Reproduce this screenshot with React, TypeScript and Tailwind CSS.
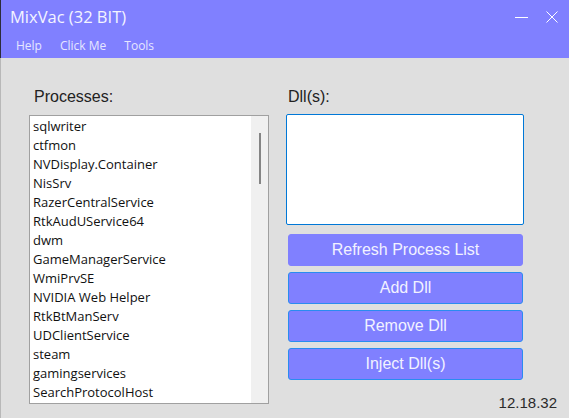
import React from 'react';

const processes = [
  'sqlwriter',
  'ctfmon',
  'NVDisplay.Container',
  'NisSrv',
  'RazerCentralService',
  'RtkAudUService64',
  'dwm',
  'GameManagerService',
  'WmiPrvSE',
  'NVIDIA Web Helper',
  'RtkBtManServ',
  'UDClientService',
  'steam',
  'gamingservices',
  'SearchProtocolHost',
];

const buttons = ['Refresh Process List', 'Add Dll', 'Remove Dll', 'Inject Dll(s)'];

export default function App() {
  return (
    <div className="w-[569px] h-[418px] bg-[#dfdfdf] flex flex-col overflow-hidden">
      {/* Title bar + menu */}
      <div className="bg-[#8080ff] h-[58px] flex flex-col shrink-0 border-l border-[#2c2c3a] font-['Open_Sans','Noto_Sans',sans-serif] text-white">
        <div className="flex items-center h-[34px] pl-[9px]">
          <span className="text-[16.5px] text-[#f4f4ff]">MixVac (32 BIT)</span>
          <div className="ml-auto flex items-center">
            <div className="w-[25px] flex justify-center">
              <div className="w-[13px] h-px bg-white" />
            </div>
            <div className="w-[35px] flex justify-center">
              <svg width="12" height="12" viewBox="0 0 12 12">
                <path d="M0.5 0.5 L11.5 11.5 M11.5 0.5 L0.5 11.5" stroke="#fff" strokeWidth="1" />
              </svg>
            </div>
          </div>
        </div>
        <div className="flex items-center gap-[18px] pl-[15px] text-[12px] text-[#e6e6ff] h-[24px]">
          <span>Help</span>
          <span>Click Me</span>
          <span>Tools</span>
        </div>
      </div>

      {/* Body */}
      <div className="flex flex-1 pt-[28px] pl-[28px] border-l border-[#b8b8b8] font-['Liberation_Sans',Arial,sans-serif]">
        <div className="flex flex-col w-[240px]">
          <div className="text-[16px] text-[#222] pl-[5px] h-[22px] leading-[22px]">Processes:</div>
          <div className="mt-[7px] h-[289px] bg-white border border-[#a0a0a0] flex">
            <ul className="flex-1 pl-[3px] pt-[1px] font-['Open_Sans','Noto_Sans',sans-serif] text-[13px] text-[#111]">
              {processes.map((p) => (
                <li key={p} className="h-[19px] leading-[19px] whitespace-nowrap">{p}</li>
              ))}
            </ul>
            <div className="w-[17px] bg-[#f0f0f0] flex justify-center pt-[17px]">
              <div className="w-[2px] h-[51px] bg-[#858585]" />
            </div>
          </div>
        </div>

        <div className="flex flex-col ml-[17px] w-[238px]">
          <div className="text-[16px] text-[#222] pl-[2px] h-[22px] leading-[22px]">Dll(s):</div>
          <div className="mt-[6px] h-[111px] bg-white border border-[#0078d7] rounded-[2px]" />
          <div className="flex flex-col gap-[6px] mt-[9px] pl-[2px] pr-[1px]">
            {buttons.map((b, i) => (
              <button
                key={b}
                className={`h-[32px] rounded-[3px] bg-[#8080ff] text-[#f2f2ff] text-[16px] border ${i === 0 ? 'border-[#8080ff]' : 'border-[#2a8cf0]'}`}
              >
                {b}
              </button>
            ))}
          </div>
          <div className="flex justify-end mt-[12px]">
            <span className="text-[15px] text-[#2a2a2a] -mr-[33px]">12.18.32</span>
          </div>
        </div>
      </div>
    </div>
  );
}
